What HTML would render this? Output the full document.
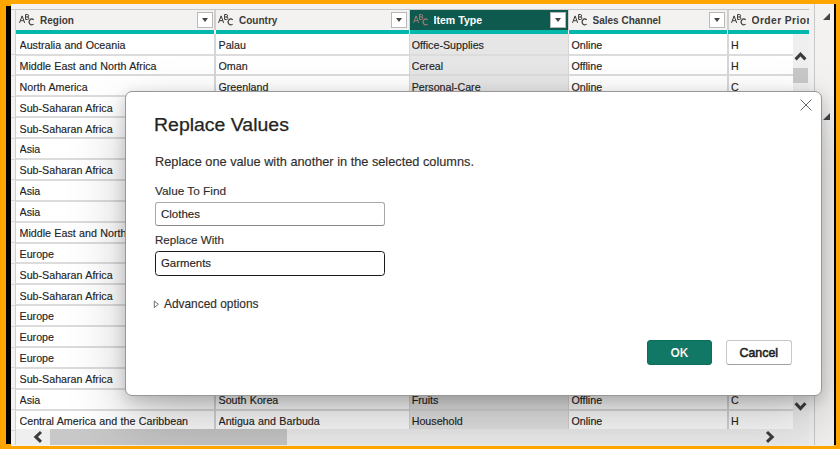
<!DOCTYPE html>
<html><head><meta charset="utf-8">
<style>
*{box-sizing:border-box;margin:0;padding:0}
html,body{width:840px;height:449px;overflow:hidden;background:#FFA500;font-family:"Liberation Sans",sans-serif}
.abs{position:absolute}
#app{position:absolute;left:11px;top:4px;width:823px;height:441px;background:#f3f2f1;overflow:hidden}
.blk{position:absolute;background:#000}
.hdr{position:absolute;top:9.5px;height:20.5px;background:#f3f2f1}
.htxt{position:absolute;top:10.5px;height:20.5px;line-height:20.5px;font-size:10px;font-weight:bold;color:#3b3a39;white-space:nowrap}
.abc{position:absolute}
.dd{position:absolute;width:16px;height:16px;background:#fff;border:1px solid #b8b8b8}
.dd .tri{position:absolute;left:4px;top:5.2px;width:0;height:0;border-left:3.5px solid transparent;border-right:3.5px solid transparent;border-top:4px solid #444}
.teal{position:absolute;top:30px;height:4px;background:#01b8aa}
.cell{position:absolute;font-size:10.7px;word-spacing:0.4px;color:#252423;white-space:nowrap;overflow:hidden;line-height:20.88px;-webkit-text-stroke:0.15px #252423}
.rowline{position:absolute;height:1px;background:#d8d8d8}
.vline{position:absolute;width:1px;background:#cfcfcf}
#dlg{position:absolute;left:124.5px;top:91px;width:697.5px;height:304.5px;background:#fff;border:1px solid #979797;border-radius:7px;box-shadow:0 25.6px 57.6px rgba(0,0,0,.22),0 4.8px 14.4px rgba(0,0,0,.18)}
.dt{position:absolute;white-space:nowrap;color:#252423;-webkit-text-stroke:0.15px #252423}
</style></head><body>
<div class="blk" style="left:6px;top:6px;width:5px;height:438px"></div>
<div class="blk" style="left:834px;top:4px;width:1.5px;height:441px"></div>
<div class="abs" style="left:11px;top:4px;width:823px;height:441.5px;background:#f3f2f1"></div>

<div class="abs" style="left:11px;top:8.5px;width:798px;height:1px;background:#c8c6c4"></div>
<div class="vline" style="left:15px;top:9px;height:436px;background:#d0d0d0"></div>
<div class="hdr" style="left:16px;width:199px;background:#f3f2f1"></div>
<svg class="abc" style="left:16px;top:10px" width="20" height="18" viewBox="0 0 20 18"><g fill="none" stroke="#3b3a39" stroke-width="1" stroke-linejoin="round"><path d="M3.5 12.9 L6.1 5.9 L8.7 12.9 M4.4 10.7 H7.8"/><path d="M9.6 9.5 V4.5 H11.3 Q12.6 4.5 12.6 5.75 Q12.6 7.0 11.3 7.0 H9.6 M11.3 7.0 Q12.9 7.0 12.9 8.25 Q12.9 9.5 11.4 9.5 H9.6"/><path d="M17.65 9.8 A2.6 3.0 0 1 0 17.65 14.0" stroke-width="1.1"/></g></svg>
<div class="htxt" style="margin-top:0px;left:40px;width:175px;overflow:hidden;font-size:10px;letter-spacing:0px;color:#3b3a39">Region</div>
<div class="dd" style="left:197px;top:12px"><div class="tri"></div></div>
<div class="teal" style="left:16px;width:198px"></div>
<div class="hdr" style="left:215px;width:194.5px;background:#f3f2f1"></div>
<svg class="abc" style="left:215px;top:10px" width="20" height="18" viewBox="0 0 20 18"><g fill="none" stroke="#3b3a39" stroke-width="1" stroke-linejoin="round"><path d="M3.5 12.9 L6.1 5.9 L8.7 12.9 M4.4 10.7 H7.8"/><path d="M9.6 9.5 V4.5 H11.3 Q12.6 4.5 12.6 5.75 Q12.6 7.0 11.3 7.0 H9.6 M11.3 7.0 Q12.9 7.0 12.9 8.25 Q12.9 9.5 11.4 9.5 H9.6"/><path d="M17.65 9.8 A2.6 3.0 0 1 0 17.65 14.0" stroke-width="1.1"/></g></svg>
<div class="htxt" style="margin-top:0px;left:239px;width:170.5px;overflow:hidden;font-size:10px;letter-spacing:0px;color:#3b3a39">Country</div>
<div class="dd" style="left:391.0px;top:12px"><div class="tri"></div></div>
<div class="teal" style="left:215.5px;width:193.5px"></div>
<div class="hdr" style="left:409.5px;width:159.0px;background:#0e5a4f"></div>
<svg class="abc" style="left:409.5px;top:10px" width="20" height="18" viewBox="0 0 20 18"><g fill="none" stroke="#a67c74" stroke-width="1" stroke-linejoin="round"><path d="M3.5 12.9 L6.1 5.9 L8.7 12.9 M4.4 10.7 H7.8"/><path d="M9.6 9.5 V4.5 H11.3 Q12.6 4.5 12.6 5.75 Q12.6 7.0 11.3 7.0 H9.6 M11.3 7.0 Q12.9 7.0 12.9 8.25 Q12.9 9.5 11.4 9.5 H9.6"/><path d="M17.65 9.8 A2.6 3.0 0 1 0 17.65 14.0" stroke-width="1.1"/></g></svg>
<div class="htxt" style="margin-top:-0.8px;left:433.5px;width:135.0px;overflow:hidden;font-size:10.6px;letter-spacing:0px;color:#fff">Item Type</div>
<div class="dd" style="left:550.0px;top:12px"><div class="tri"></div></div>
<div class="teal" style="left:410.0px;width:158.0px"></div>
<div class="hdr" style="left:568.5px;width:159.0px;background:#f3f2f1"></div>
<svg class="abc" style="left:568.5px;top:10px" width="20" height="18" viewBox="0 0 20 18"><g fill="none" stroke="#3b3a39" stroke-width="1" stroke-linejoin="round"><path d="M3.5 12.9 L6.1 5.9 L8.7 12.9 M4.4 10.7 H7.8"/><path d="M9.6 9.5 V4.5 H11.3 Q12.6 4.5 12.6 5.75 Q12.6 7.0 11.3 7.0 H9.6 M11.3 7.0 Q12.9 7.0 12.9 8.25 Q12.9 9.5 11.4 9.5 H9.6"/><path d="M17.65 9.8 A2.6 3.0 0 1 0 17.65 14.0" stroke-width="1.1"/></g></svg>
<div class="htxt" style="margin-top:0px;left:592.5px;width:135.0px;overflow:hidden;font-size:10px;letter-spacing:0px;color:#3b3a39">Sales Channel</div>
<div class="dd" style="left:709.0px;top:12px"><div class="tri"></div></div>
<div class="teal" style="left:569.0px;width:158.0px"></div>
<div class="hdr" style="left:727.5px;width:81.5px;background:#f3f2f1"></div>
<svg class="abc" style="left:727.5px;top:10px" width="20" height="18" viewBox="0 0 20 18"><g fill="none" stroke="#3b3a39" stroke-width="1" stroke-linejoin="round"><path d="M3.5 12.9 L6.1 5.9 L8.7 12.9 M4.4 10.7 H7.8"/><path d="M9.6 9.5 V4.5 H11.3 Q12.6 4.5 12.6 5.75 Q12.6 7.0 11.3 7.0 H9.6 M11.3 7.0 Q12.9 7.0 12.9 8.25 Q12.9 9.5 11.4 9.5 H9.6"/><path d="M17.65 9.8 A2.6 3.0 0 1 0 17.65 14.0" stroke-width="1.1"/></g></svg>
<div class="htxt" style="margin-top:0px;left:751.5px;width:57.5px;overflow:hidden;font-size:10.3px;letter-spacing:0.4px;color:#3b3a39">Order Priority</div>
<div class="teal" style="left:728.0px;width:81.5px"></div>
<div class="vline" style="left:214px;width:2px;top:9.5px;height:20.5px;background:#d0cfce"></div>
<div class="vline" style="left:409px;width:1px;top:9.5px;height:20.5px;background:#d0cfce"></div>
<div class="vline" style="left:568px;width:1px;top:9.5px;height:20.5px;background:#d0cfce"></div>
<div class="vline" style="left:727px;width:2px;top:9.5px;height:20.5px;background:#d0cfce"></div>
<div class="abs" style="left:16px;top:34px;width:777px;height:395px;background:#fff"></div>
<div class="abs" style="left:410px;top:34px;width:158px;height:395px;background:#e6e6e6"></div>
<div class="rowline" style="left:16px;top:53.58px;width:777px;height:2px;background:#dcdcdc"></div>
<div class="rowline" style="left:11px;top:54.18px;width:4px;background:#d8d8d8"></div>
<div class="cell" style="left:19.5px;top:35.00px;width:194.5px">Australia and Oceania</div>
<div class="cell" style="left:218.5px;top:35.00px;width:190.0px">Palau</div>
<div class="cell" style="left:411.7px;top:35.00px;width:155.8px">Office-Supplies</div>
<div class="cell" style="left:571.4px;top:35.00px;width:155.10000000000002px">Online</div>
<div class="cell" style="left:731px;top:35.00px;width:61px">H</div>
<div class="rowline" style="left:16px;top:74.46px;width:777px;height:2px;background:#dcdcdc"></div>
<div class="rowline" style="left:11px;top:75.06px;width:4px;background:#d8d8d8"></div>
<div class="cell" style="left:19.5px;top:55.88px;width:194.5px">Middle East and North Africa</div>
<div class="cell" style="left:218.5px;top:55.88px;width:190.0px">Oman</div>
<div class="cell" style="left:411.7px;top:55.88px;width:155.8px">Cereal</div>
<div class="cell" style="left:571.4px;top:55.88px;width:155.10000000000002px">Offline</div>
<div class="cell" style="left:731px;top:55.88px;width:61px">H</div>
<div class="rowline" style="left:16px;top:95.34px;width:777px;height:2px;background:#dcdcdc"></div>
<div class="rowline" style="left:11px;top:95.94px;width:4px;background:#d8d8d8"></div>
<div class="cell" style="left:19.5px;top:76.76px;width:194.5px">North America</div>
<div class="cell" style="left:218.5px;top:76.76px;width:190.0px">Greenland</div>
<div class="cell" style="left:411.7px;top:76.76px;width:155.8px">Personal-Care</div>
<div class="cell" style="left:571.4px;top:76.76px;width:155.10000000000002px">Online</div>
<div class="cell" style="left:731px;top:76.76px;width:61px">C</div>
<div class="rowline" style="left:16px;top:116.22px;width:777px;height:2px;background:#dcdcdc"></div>
<div class="rowline" style="left:11px;top:116.82px;width:4px;background:#d8d8d8"></div>
<div class="cell" style="left:19.5px;top:97.64px;width:194.5px">Sub-Saharan Africa</div>
<div class="rowline" style="left:16px;top:137.10px;width:777px;height:2px;background:#dcdcdc"></div>
<div class="rowline" style="left:11px;top:137.70px;width:4px;background:#d8d8d8"></div>
<div class="cell" style="left:19.5px;top:118.52px;width:194.5px">Sub-Saharan Africa</div>
<div class="rowline" style="left:16px;top:157.98px;width:777px;height:2px;background:#dcdcdc"></div>
<div class="rowline" style="left:11px;top:158.58px;width:4px;background:#d8d8d8"></div>
<div class="cell" style="left:19.5px;top:139.40px;width:194.5px">Asia</div>
<div class="rowline" style="left:16px;top:178.86px;width:777px;height:2px;background:#dcdcdc"></div>
<div class="rowline" style="left:11px;top:179.46px;width:4px;background:#d8d8d8"></div>
<div class="cell" style="left:19.5px;top:160.28px;width:194.5px">Sub-Saharan Africa</div>
<div class="rowline" style="left:16px;top:199.74px;width:777px;height:2px;background:#dcdcdc"></div>
<div class="rowline" style="left:11px;top:200.34px;width:4px;background:#d8d8d8"></div>
<div class="cell" style="left:19.5px;top:181.16px;width:194.5px">Asia</div>
<div class="rowline" style="left:16px;top:220.62px;width:777px;height:2px;background:#dcdcdc"></div>
<div class="rowline" style="left:11px;top:221.22px;width:4px;background:#d8d8d8"></div>
<div class="cell" style="left:19.5px;top:202.04px;width:194.5px">Asia</div>
<div class="rowline" style="left:16px;top:241.50px;width:777px;height:2px;background:#dcdcdc"></div>
<div class="rowline" style="left:11px;top:242.10px;width:4px;background:#d8d8d8"></div>
<div class="cell" style="left:19.5px;top:222.92px;width:194.5px">Middle East and North Africa</div>
<div class="rowline" style="left:16px;top:262.38px;width:777px;height:2px;background:#dcdcdc"></div>
<div class="rowline" style="left:11px;top:262.98px;width:4px;background:#d8d8d8"></div>
<div class="cell" style="left:19.5px;top:243.80px;width:194.5px">Europe</div>
<div class="rowline" style="left:16px;top:283.26px;width:777px;height:2px;background:#dcdcdc"></div>
<div class="rowline" style="left:11px;top:283.86px;width:4px;background:#d8d8d8"></div>
<div class="cell" style="left:19.5px;top:264.68px;width:194.5px">Sub-Saharan Africa</div>
<div class="rowline" style="left:16px;top:304.14px;width:777px;height:2px;background:#dcdcdc"></div>
<div class="rowline" style="left:11px;top:304.74px;width:4px;background:#d8d8d8"></div>
<div class="cell" style="left:19.5px;top:285.56px;width:194.5px">Sub-Saharan Africa</div>
<div class="rowline" style="left:16px;top:325.02px;width:777px;height:2px;background:#dcdcdc"></div>
<div class="rowline" style="left:11px;top:325.62px;width:4px;background:#d8d8d8"></div>
<div class="cell" style="left:19.5px;top:306.44px;width:194.5px">Europe</div>
<div class="rowline" style="left:16px;top:345.90px;width:777px;height:2px;background:#dcdcdc"></div>
<div class="rowline" style="left:11px;top:346.50px;width:4px;background:#d8d8d8"></div>
<div class="cell" style="left:19.5px;top:327.32px;width:194.5px">Europe</div>
<div class="rowline" style="left:16px;top:366.78px;width:777px;height:2px;background:#dcdcdc"></div>
<div class="rowline" style="left:11px;top:367.38px;width:4px;background:#d8d8d8"></div>
<div class="cell" style="left:19.5px;top:348.20px;width:194.5px">Europe</div>
<div class="rowline" style="left:16px;top:387.66px;width:777px;height:2px;background:#dcdcdc"></div>
<div class="rowline" style="left:11px;top:388.26px;width:4px;background:#d8d8d8"></div>
<div class="cell" style="left:19.5px;top:369.08px;width:194.5px">Sub-Saharan Africa</div>
<div class="rowline" style="left:16px;top:408.54px;width:777px;height:2px;background:#dcdcdc"></div>
<div class="rowline" style="left:11px;top:409.14px;width:4px;background:#d8d8d8"></div>
<div class="cell" style="left:19.5px;top:389.96px;width:194.5px">Asia</div>
<div class="cell" style="left:218.5px;top:389.96px;width:190.0px">South Korea</div>
<div class="cell" style="left:411.7px;top:389.96px;width:155.8px">Fruits</div>
<div class="cell" style="left:571.4px;top:389.96px;width:155.10000000000002px">Offline</div>
<div class="cell" style="left:731px;top:389.96px;width:61px">C</div>
<div class="rowline" style="left:16px;top:429.42px;width:777px;height:2px;background:#dcdcdc"></div>
<div class="rowline" style="left:11px;top:430.02px;width:4px;background:#d8d8d8"></div>
<div class="cell" style="left:19.5px;top:410.84px;width:194.5px">Central America and the Caribbean</div>
<div class="cell" style="left:218.5px;top:410.84px;width:190.0px">Antigua and Barbuda</div>
<div class="cell" style="left:411.7px;top:410.84px;width:155.8px">Household</div>
<div class="cell" style="left:571.4px;top:410.84px;width:155.10000000000002px">Online</div>
<div class="cell" style="left:731px;top:410.84px;width:61px">H</div>
<div class="vline" style="left:214px;width:2px;top:34px;height:395px;background:#d6d6d6"></div>
<div class="vline" style="left:409px;width:1px;top:34px;height:395px;background:#d6d6d6"></div>
<div class="vline" style="left:568px;width:1px;top:34px;height:395px;background:#d6d6d6"></div>
<div class="vline" style="left:727px;width:2px;top:34px;height:395px;background:#d6d6d6"></div>
<div class="abs" style="left:793px;top:34px;width:16px;height:411px;background:#efefef"></div>
<div class="abs" style="left:809px;top:4px;width:5px;height:441px;background:#f3f2f1"></div>
<div class="vline" style="left:813.5px;top:4px;height:441px;background:#c8c8c8"></div>
<svg class="abs" style="left:790px;top:45px" width="22" height="22" viewBox="790 45 22 22"><path d="M795.6 59.4 L800.5 54.2 L805.4 59.4" fill="none" stroke="#3c3c3c" stroke-width="3.1"/></svg>
<div class="abs" style="left:793px;top:68px;width:15px;height:15px;background:#c8c8c8"></div>
<svg class="abs" style="left:786px;top:396px" width="26" height="22" viewBox="786 396 26 22"><path d="M795.6 403.3 L800.5 408.5 L805.4 403.3" fill="none" stroke="#3c3c3c" stroke-width="3.1"/></svg>
<div class="abs" style="left:16px;top:429px;width:777px;height:16px;background:#efefef"></div>
<div class="abs" style="left:50px;top:429px;width:237px;height:16px;background:#c8c8c8"></div>
<svg class="abs" style="left:24px;top:425px" width="30" height="24" viewBox="24 425 30 24"><path d="M41 432 L35.8 436.9 L41 441.8" fill="none" stroke="#3c3c3c" stroke-width="3"/></svg>
<svg class="abs" style="left:760px;top:425px" width="24" height="24" viewBox="760 425 24 24"><path d="M767 432 L772.2 436.9 L767 441.8" fill="none" stroke="#3c3c3c" stroke-width="3"/></svg>
<svg class="abs" style="left:822px;top:13px" width="9" height="8" viewBox="0 0 9 8"><path d="M8 0 L8 7 L1 7 Z" fill="#444"/></svg>
<svg class="abs" style="left:822px;top:113px" width="9" height="8" viewBox="0 0 9 8"><path d="M8 0 L8 7 L1 7 Z" fill="#444"/></svg>
<div class="abs" style="left:11px;top:4px;width:823px;height:441.5px;overflow:hidden"><div class="abs" style="left:-11px;top:-4px;width:840px;height:449px"><div id="dlg">
<svg class="abs" style="left:674.5px;top:6.5px" width="12" height="12" viewBox="0 0 12 12"><path d="M0.5 0.5 L11.5 11.5 M11.5 0.5 L0.5 11.5" stroke="#6a6a6a" stroke-width="1" fill="none"/></svg>
</div></div></div>
<div class="dt" style="left:154px;top:113px;font-size:17.5px;line-height:24px;transform:scaleX(1.112);transform-origin:0 0;-webkit-text-stroke:0.25px #252423">Replace Values</div>
<div class="dt" style="left:155px;top:154px;font-size:12.75px;line-height:16px;color:#323130">Replace one value with another in the selected columns.</div>
<div class="dt" style="left:155px;top:183px;font-size:11.8px;line-height:16px;color:#323130">Value To Find</div>
<div class="abs" style="left:155px;top:201.5px;width:230px;height:24.5px;border:1px solid #a8a8a8;border-bottom-color:#888;border-radius:3px;background:#fff"></div>
<div class="dt" style="left:161px;top:206px;font-size:11.5px;line-height:16px">Clothes</div>
<div class="dt" style="left:155px;top:232px;font-size:11.6px;line-height:16px;color:#323130">Replace With</div>
<div class="abs" style="left:155px;top:250.5px;width:230px;height:25px;border:1.8px solid #1a1a1a;border-radius:3.5px;background:#fff"></div>
<div class="dt" style="left:161px;top:255px;font-size:11.4px;line-height:16px">Garments</div>
<svg class="abs" style="left:150px;top:296px" width="14" height="16" viewBox="150 296 14 16"><path d="M154.3 301 L158.4 304.3 L154.3 307.6 Z" fill="none" stroke="#6e6e6e" stroke-width="1"/></svg>
<div class="dt" style="left:164px;top:296px;font-size:11.9px;line-height:16px;color:#323130">Advanced options</div>
<div class="abs" style="left:647px;top:340px;width:65px;height:25px;background:#117865;border:1px solid #0f6d5c;border-radius:3px"></div>
<div class="dt" style="left:647px;top:341px;width:65px;height:25px;line-height:25px;text-align:center;font-size:12px;font-weight:bold;color:#fff">OK</div>
<div class="abs" style="left:726px;top:340px;width:65.5px;height:25px;background:#fff;border:1px solid #c8c8c8;border-bottom-color:#a0a0a0;border-radius:3px"></div>
<div class="dt" style="left:726px;top:341px;width:65.5px;height:25px;line-height:25px;text-align:center;font-size:12.4px;font-weight:normal;color:#201f1e;-webkit-text-stroke:0.55px #201f1e">Cancel</div>
</body></html>
